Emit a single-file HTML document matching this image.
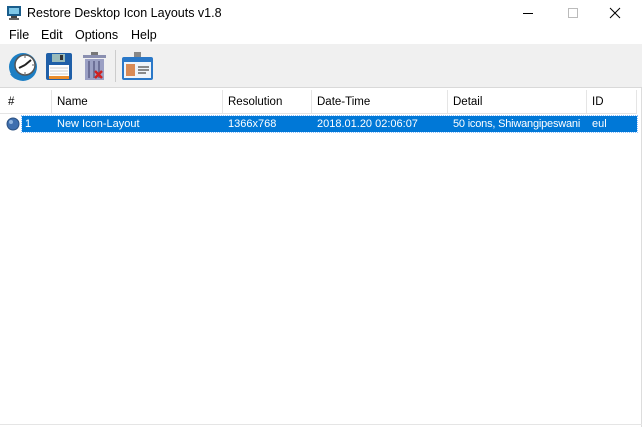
<!DOCTYPE html>
<html><head><meta charset="utf-8"><style>
*{margin:0;padding:0;box-sizing:border-box}
body{width:644px;height:427px;background:#fff;font-family:"Liberation Sans",sans-serif;font-size:11.5px;color:#000;position:relative;overflow:hidden}
.abs{position:absolute}
#title{left:0;top:0;width:644px;height:26px}
#menu{top:26px;left:0;height:19px}
#menu span{position:absolute;top:2px;font-size:12.5px}
#tb{left:0;top:44px;width:642px;height:44px;background:#f0f0f0;border-bottom:1px solid #d9d9d9}
#hdr{left:0;top:90px;width:637px;height:24px;border-bottom:1px solid #e5e5e5}
#hdr span{position:absolute;top:6px}
.sep{position:absolute;top:0;width:1px;height:24px;background:#e5e5e5}
#row{left:22px;top:116px;width:615px;height:16px;background:#0078d7;outline:1px dotted #8cc2ff;color:#fff;font-size:11px}
#row span{position:absolute;top:2px;white-space:nowrap;overflow:hidden}
#rb{left:641px;top:88px;width:1px;height:339px;background:#ddd}
</style></head><body>
<div id="title" class="abs">
 <svg class="abs" style="left:6px;top:5px" width="16" height="15"><rect x="1" y="1" width="14" height="10" fill="#1a5d8c"/><rect x="3" y="3" width="10" height="6" fill="#7fc8e8"/><rect x="5" y="11" width="6" height="2" fill="#444"/><rect x="3" y="13" width="10" height="2" fill="#666"/></svg>
 <span class="abs" style="left:27px;top:6px;font-size:12.5px">Restore Desktop Icon Layouts v1.8</span>
 <div class="abs" style="left:523px;top:13px;width:10px;height:1px;background:#000"></div>
 <div class="abs" style="left:568px;top:8px;width:10px;height:10px;border:1px solid #bbb"></div>
 <svg class="abs" style="left:609px;top:7px" width="12" height="12"><path d="M1 1L11 11M11 1L1 11" stroke="#000" stroke-width="1"/></svg>
</div>
<div id="menu" class="abs"><span style="left:9px">File</span><span style="left:41px">Edit</span><span style="left:75px">Options</span><span style="left:131px">Help</span></div>
<div id="tb" class="abs">
 <svg class="abs" style="left:8px;top:8px" width="30" height="30"><circle cx="15" cy="15" r="14" fill="#1d7fc4"/><circle cx="17" cy="13" r="10" fill="#fff" stroke="#555" stroke-width="1.5"/><path d="M17 13L23 8M17 13L11 16" stroke="#222" stroke-width="2"/><path d="M24 13H26M17 4V6M17 20V22" stroke="#666"/><path d="M2 22Q6 28 12 28L8 23Z" fill="#1d7fc4"/></svg>
 <svg class="abs" style="left:46px;top:9px" width="26" height="27"><rect x="0" y="0" width="26" height="27" rx="2" fill="#1f5fa8"/><rect x="6" y="1" width="13" height="8" fill="#9bb"/><rect x="14" y="2" width="3" height="5" fill="#333"/><rect x="3" y="12" width="20" height="14" fill="#fff"/><path d="M4 15H22M4 18H22M4 21H22" stroke="#ccc"/><rect x="3" y="23" width="20" height="3" fill="#e98c2a"/></svg>
 <svg class="abs" style="left:82px;top:8px" width="25" height="29"><rect x="9" y="0" width="7" height="3" fill="#777"/><rect x="1" y="3" width="23" height="3" fill="#8a8fb0"/><rect x="3" y="7" width="19" height="21" fill="#9ba0c4"/><path d="M7 9V26M12 9V26M17 9V26" stroke="#6d7098" stroke-width="2"/><path d="M13 19L20 26M20 19L13 26" stroke="#d02020" stroke-width="2.5"/></svg>
 <div class="abs" style="left:115px;top:6px;width:1px;height:32px;background:#ccc"></div>
 <svg class="abs" style="left:122px;top:8px" width="31" height="29"><rect x="12" y="0" width="7" height="7" fill="#888"/><rect x="0" y="5" width="31" height="23" rx="2" fill="#2a78c8"/><rect x="2" y="10" width="27" height="16" fill="#eef4fa"/><rect x="4" y="12" width="9" height="12" fill="#d88a55"/><path d="M16 15H27M16 18H27M16 21H24" stroke="#666" stroke-width="1.5"/></svg>
</div>
<div id="hdr" class="abs">
 <span style="left:8px">#</span><div class="sep" style="left:51px"></div>
 <span style="left:57px">Name</span><div class="sep" style="left:222px"></div>
 <span style="left:228px">Resolution</span><div class="sep" style="left:311px"></div>
 <span style="left:317px">Date-Time</span><div class="sep" style="left:447px"></div>
 <span style="left:453px">Detail</span><div class="sep" style="left:586px"></div>
 <span style="left:592px">ID</span><div class="sep" style="left:636px"></div>
</div>
<svg class="abs" style="left:6px;top:117px" width="14" height="14"><circle cx="7" cy="7" r="6" fill="#3f6fae" stroke="#2a4f80"/><circle cx="5" cy="5" r="2" fill="#8fb3dd"/></svg>
<div id="row" class="abs">
 <span style="left:3px">1</span><span style="left:35px">New Icon-Layout</span><span style="left:206px">1366x768</span><span style="left:295px">2018.01.20 02:06:07</span><span style="left:431px;width:130px;letter-spacing:-0.2px">50 icons, Shiwangipeswani</span><span style="left:570px">eul</span>
</div>
<div id="rb" class="abs"></div>
<div class="abs" style="left:0;top:424px;width:642px;height:1px;background:#e5e5e5"></div>
</body></html>
